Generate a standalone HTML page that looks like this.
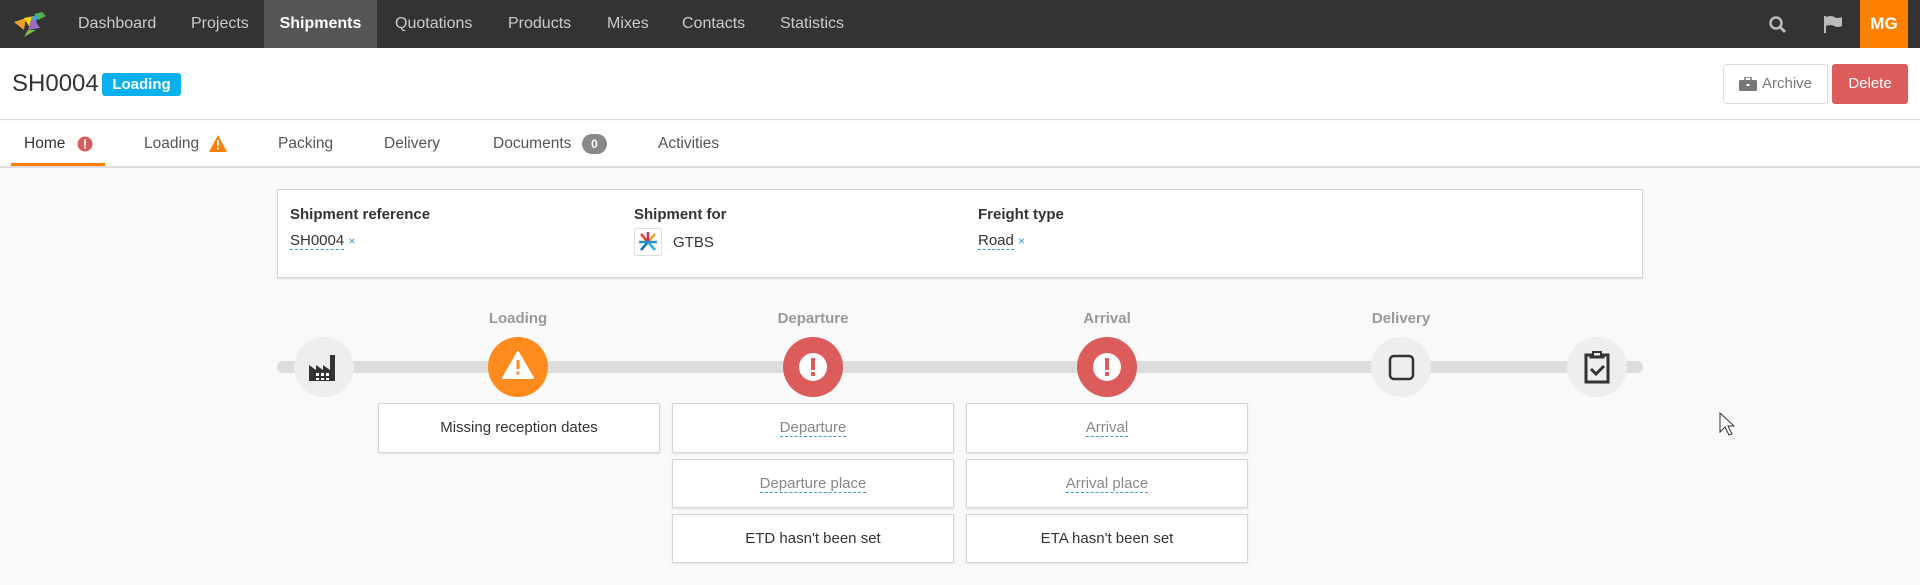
<!DOCTYPE html>
<html><head><meta charset="utf-8"><style>
*{box-sizing:border-box;margin:0;padding:0}
body{width:1920px;height:585px;overflow:hidden;background:#f9f9f9;font-family:"Liberation Sans",sans-serif;color:#333;position:relative}
.nav{position:absolute;left:0;top:0;width:1920px;height:48px;background:#333}
.nav span{position:absolute;top:0;height:48px;line-height:48px;color:#ccc;font-size:16px}
.hdr{position:absolute;top:48px;left:0;width:1920px;height:72px;background:#fff;border-bottom:1px solid #ddd}
.tabs{position:absolute;top:121px;left:0;width:1920px;height:47px;background:#fff;border-bottom:2px solid #ddd}
.tabs span{position:absolute;top:0;line-height:45px;font-size:15.5px;color:#555}
.abs{position:absolute}
.box{position:absolute;background:#fff;border:1px solid #d5d5d5;box-shadow:0 1px 2px rgba(0,0,0,.1);text-align:center;font-size:15px;line-height:48px}
.dot{border-bottom:1px dashed #3a9ad9}
.circ{position:absolute;width:60px;height:60px;border-radius:50%;top:337px}
.lbl{position:absolute;top:310px;font-size:15px;font-weight:bold;color:#999;transform:translateX(-50%)}
</style></head><body>
<div class="nav">
<svg class="abs" style="left:12px;top:10px" width="36" height="28" viewBox="0 0 36 28"><polygon points="2,12 14,8 12,20" fill="#f0a030"/><polygon points="12,8 22,6 18,18" fill="#f5d800"/><polygon points="20,6 28,18 16,20" fill="#9b6bc0"/><polygon points="22,4 30,2 34,6 26,10" fill="#4caf50"/><polygon points="20,8 26,4 24,12" fill="#2ab0e0"/><polygon points="16,20 24,20 12,27" fill="#7cc142"/></svg>
<span style="left:78px">Dashboard</span><span style="left:191px">Projects</span>
<span style="left:264px;width:113px;background:#555;color:#fff;text-align:center;font-weight:bold">Shipments</span>
<span style="left:395px">Quotations</span><span style="left:508px">Products</span><span style="left:607px">Mixes</span><span style="left:682px">Contacts</span><span style="left:780px">Statistics</span>
<svg class="abs" style="left:1768px;top:15px" width="20" height="20" viewBox="0 0 20 20"><circle cx="8" cy="8" r="5.5" fill="none" stroke="#bbb" stroke-width="2.5"/><line x1="12" y1="12" x2="17" y2="17" stroke="#bbb" stroke-width="3"/></svg>
<svg class="abs" style="left:1823px;top:15px" width="20" height="18" viewBox="0 0 20 18"><rect x="1" y="1" width="2" height="17" fill="#bbb"/><path d="M3 2 Q8 0 11 2 Q15 4 19 2 V11 Q15 13 11 11 Q8 9 3 11Z" fill="#bbb"/></svg>
<div class="abs" style="left:1860px;top:0;width:48px;height:48px;background:#ff7f00;color:#fff;font-weight:bold;font-size:17px;line-height:48px;text-align:center">MG</div>
</div>
<div class="hdr">
<div class="abs" style="left:12px;top:22px;font-size:24px;color:#333">SH0004</div>
<div class="abs" style="left:102px;top:25px;width:79px;height:23px;background:#0bb0ef;color:#fff;font-weight:bold;font-size:15px;line-height:23px;text-align:center;border-radius:3px">Loading</div>
<div class="abs" style="left:1723px;top:16px;width:105px;height:40px;border:1px solid #ddd;border-radius:3px;color:#777;font-size:15px;line-height:38px;padding-left:38px"><svg class="abs" style="left:15px;top:12px" width="18" height="14" viewBox="0 0 18 14"><rect x="0" y="3" width="18" height="11" rx="1.5" fill="#777"/><rect x="6" y="0" width="6" height="4" fill="none" stroke="#777" stroke-width="1.5"/><rect x="7.5" y="7" width="3" height="2" fill="#fff"/></svg>Archive</div>
<div class="abs" style="left:1832px;top:16px;width:76px;height:40px;background:#dc5c5c;border-radius:3px;color:#fff;font-size:15px;line-height:40px;text-align:center">Delete</div>
</div>
<div class="tabs">
<span style="left:24px;color:#333">Home</span>
<svg class="abs" style="left:77px;top:15px" width="16" height="16"><circle cx="8" cy="8" r="7.5" fill="#dc5c5c"/><rect x="7" y="3.5" width="2" height="6" fill="#fff"/><rect x="7" y="10.5" width="2" height="2" fill="#fff"/></svg>
<div class="abs" style="left:11px;top:42px;width:94px;height:3px;background:#ff7f00"></div>
<span style="left:144px">Loading</span>
<svg class="abs" style="left:209px;top:14px" width="18" height="17"><polygon points="9,0 18,17 0,17" fill="#ff7f00"/><rect x="8" y="5" width="2" height="6" fill="#fff"/><rect x="8" y="12.5" width="2" height="2" fill="#fff"/></svg>
<span style="left:278px">Packing</span><span style="left:384px">Delivery</span><span style="left:493px">Documents</span>
<div class="abs" style="left:582px;top:13px;width:25px;height:20px;border-radius:10px;background:#888;color:#fff;font-size:12px;font-weight:bold;line-height:20px;text-align:center">0</div>
<span style="left:658px">Activities</span>
</div>
<div class="abs" style="left:277px;top:189px;width:1366px;height:89px;background:#fff;border:1px solid #d5d5d5;box-shadow:0 1px 2px rgba(0,0,0,.1)">
<div class="abs" style="left:12px;top:16px;font-weight:bold;font-size:15px">Shipment reference</div>
<div class="abs" style="left:12px;top:42px;font-size:15px"><span class="dot">SH0004</span> <span style="color:#3a9ad9;font-size:12px">×</span></div>
<div class="abs" style="left:356px;top:16px;font-weight:bold;font-size:15px">Shipment for</div>
<div class="abs" style="left:356px;top:38px;width:28px;height:28px;border:1px solid #ddd;border-radius:2px"><svg width="26" height="26" viewBox="0 0 26 26"><g stroke-width="2.5"><line x1="6" y1="5" x2="13" y2="13" stroke="#e5402a"/><line x1="20" y1="5" x2="13" y2="13" stroke="#f0a030"/><line x1="13" y1="3" x2="13" y2="13" stroke="#c03060"/><line x1="6" y1="21" x2="13" y2="13" stroke="#1a6fb0"/><line x1="20" y1="21" x2="13" y2="13" stroke="#2ab0e0"/><line x1="4" y1="13" x2="22" y2="13" stroke="#2d8fc8"/></g></svg></div>
<div class="abs" style="left:395px;top:44px;font-size:15px">GTBS</div>
<div class="abs" style="left:700px;top:16px;font-weight:bold;font-size:15px">Freight type</div>
<div class="abs" style="left:700px;top:42px;font-size:15px"><span class="dot">Road</span> <span style="color:#3a9ad9;font-size:12px">×</span></div>
</div>
<div class="abs" style="left:277px;top:361px;width:1366px;height:12px;border-radius:6px;background:#ddd"></div>
<div class="lbl" style="left:518px">Loading</div><div class="lbl" style="left:813px">Departure</div><div class="lbl" style="left:1107px">Arrival</div><div class="lbl" style="left:1401px">Delivery</div>
<div class="circ" style="left:294px;background:#eee"><svg style="position:absolute;left:12px;top:16px" width="36" height="30" viewBox="0 0 36 30"><path d="M3 28V12l7 5v-5l7 5v-5l7 5V2h5v26Z" fill="#333"/><g fill="#fff"><rect x="10" y="20" width="3" height="3"/><rect x="15" y="20" width="3" height="3"/><rect x="20" y="20" width="3" height="3"/><rect x="10" y="25" width="3" height="2"/><rect x="15" y="25" width="3" height="2"/><rect x="20" y="25" width="3" height="2"/></g></svg></div>
<div class="circ" style="left:488px;background:#ff8a1e"><svg style="position:absolute;left:14px;top:13px" width="32" height="30" viewBox="0 0 32 30"><polygon points="16,2 31,28 1,28" fill="#fff" stroke="#fff" stroke-linejoin="round" stroke-width="2"/><rect x="14.5" y="10" width="3" height="9" fill="#ff8a1e"/><rect x="14.5" y="21.5" width="3" height="3" fill="#ff8a1e"/></svg></div>
<div class="circ" style="left:783px;background:#dc5c5c"><svg style="position:absolute;left:14px;top:14px" width="32" height="32"><circle cx="16" cy="16" r="14" fill="#fff"/><rect x="14" y="7" width="4" height="12" fill="#dc5c5c"/><rect x="14" y="21" width="4" height="4" fill="#dc5c5c"/></svg></div>
<div class="circ" style="left:1077px;background:#dc5c5c"><svg style="position:absolute;left:14px;top:14px" width="32" height="32"><circle cx="16" cy="16" r="14" fill="#fff"/><rect x="14" y="7" width="4" height="12" fill="#dc5c5c"/><rect x="14" y="21" width="4" height="4" fill="#dc5c5c"/></svg></div>
<div class="circ" style="left:1371px;background:#eee"><svg style="position:absolute;left:17px;top:17px" width="27" height="27"><rect x="2" y="2" width="23" height="23" rx="4" fill="none" stroke="#333" stroke-width="2.5"/></svg></div>
<div class="circ" style="left:1567px;background:#eee"><svg style="position:absolute;left:15px;top:14px" width="30" height="34" viewBox="0 0 30 34"><path d="M4 4h5v2h12V4h5v27H4Z" fill="none" stroke="#333" stroke-width="3"/><rect x="11" y="1" width="8" height="5" fill="none" stroke="#333" stroke-width="2"/><path d="M9 18l5 5 8-8" fill="none" stroke="#333" stroke-width="3"/></svg></div>
<div class="box" style="left:378px;top:403px;width:282px;height:50px">Missing reception dates</div>
<div class="box" style="left:672px;top:403px;width:282px;height:50px;color:#888"><span class="dot">Departure</span></div>
<div class="box" style="left:672px;top:459px;width:282px;height:49px;color:#888"><span class="dot">Departure place</span></div>
<div class="box" style="left:672px;top:514px;width:282px;height:49px">ETD hasn't been set</div>
<div class="box" style="left:966px;top:403px;width:282px;height:50px;color:#888"><span class="dot">Arrival</span></div>
<div class="box" style="left:966px;top:459px;width:282px;height:49px;color:#888"><span class="dot">Arrival place</span></div>
<div class="box" style="left:966px;top:514px;width:282px;height:49px">ETA hasn't been set</div>
<svg class="abs" style="left:1719px;top:412px" width="16" height="24" viewBox="0 0 16 24"><path d="M1 1v19l5-5 4 8 3-1-4-8h6Z" fill="#fff" stroke="#333" stroke-width="1"/></svg>
</body></html>
